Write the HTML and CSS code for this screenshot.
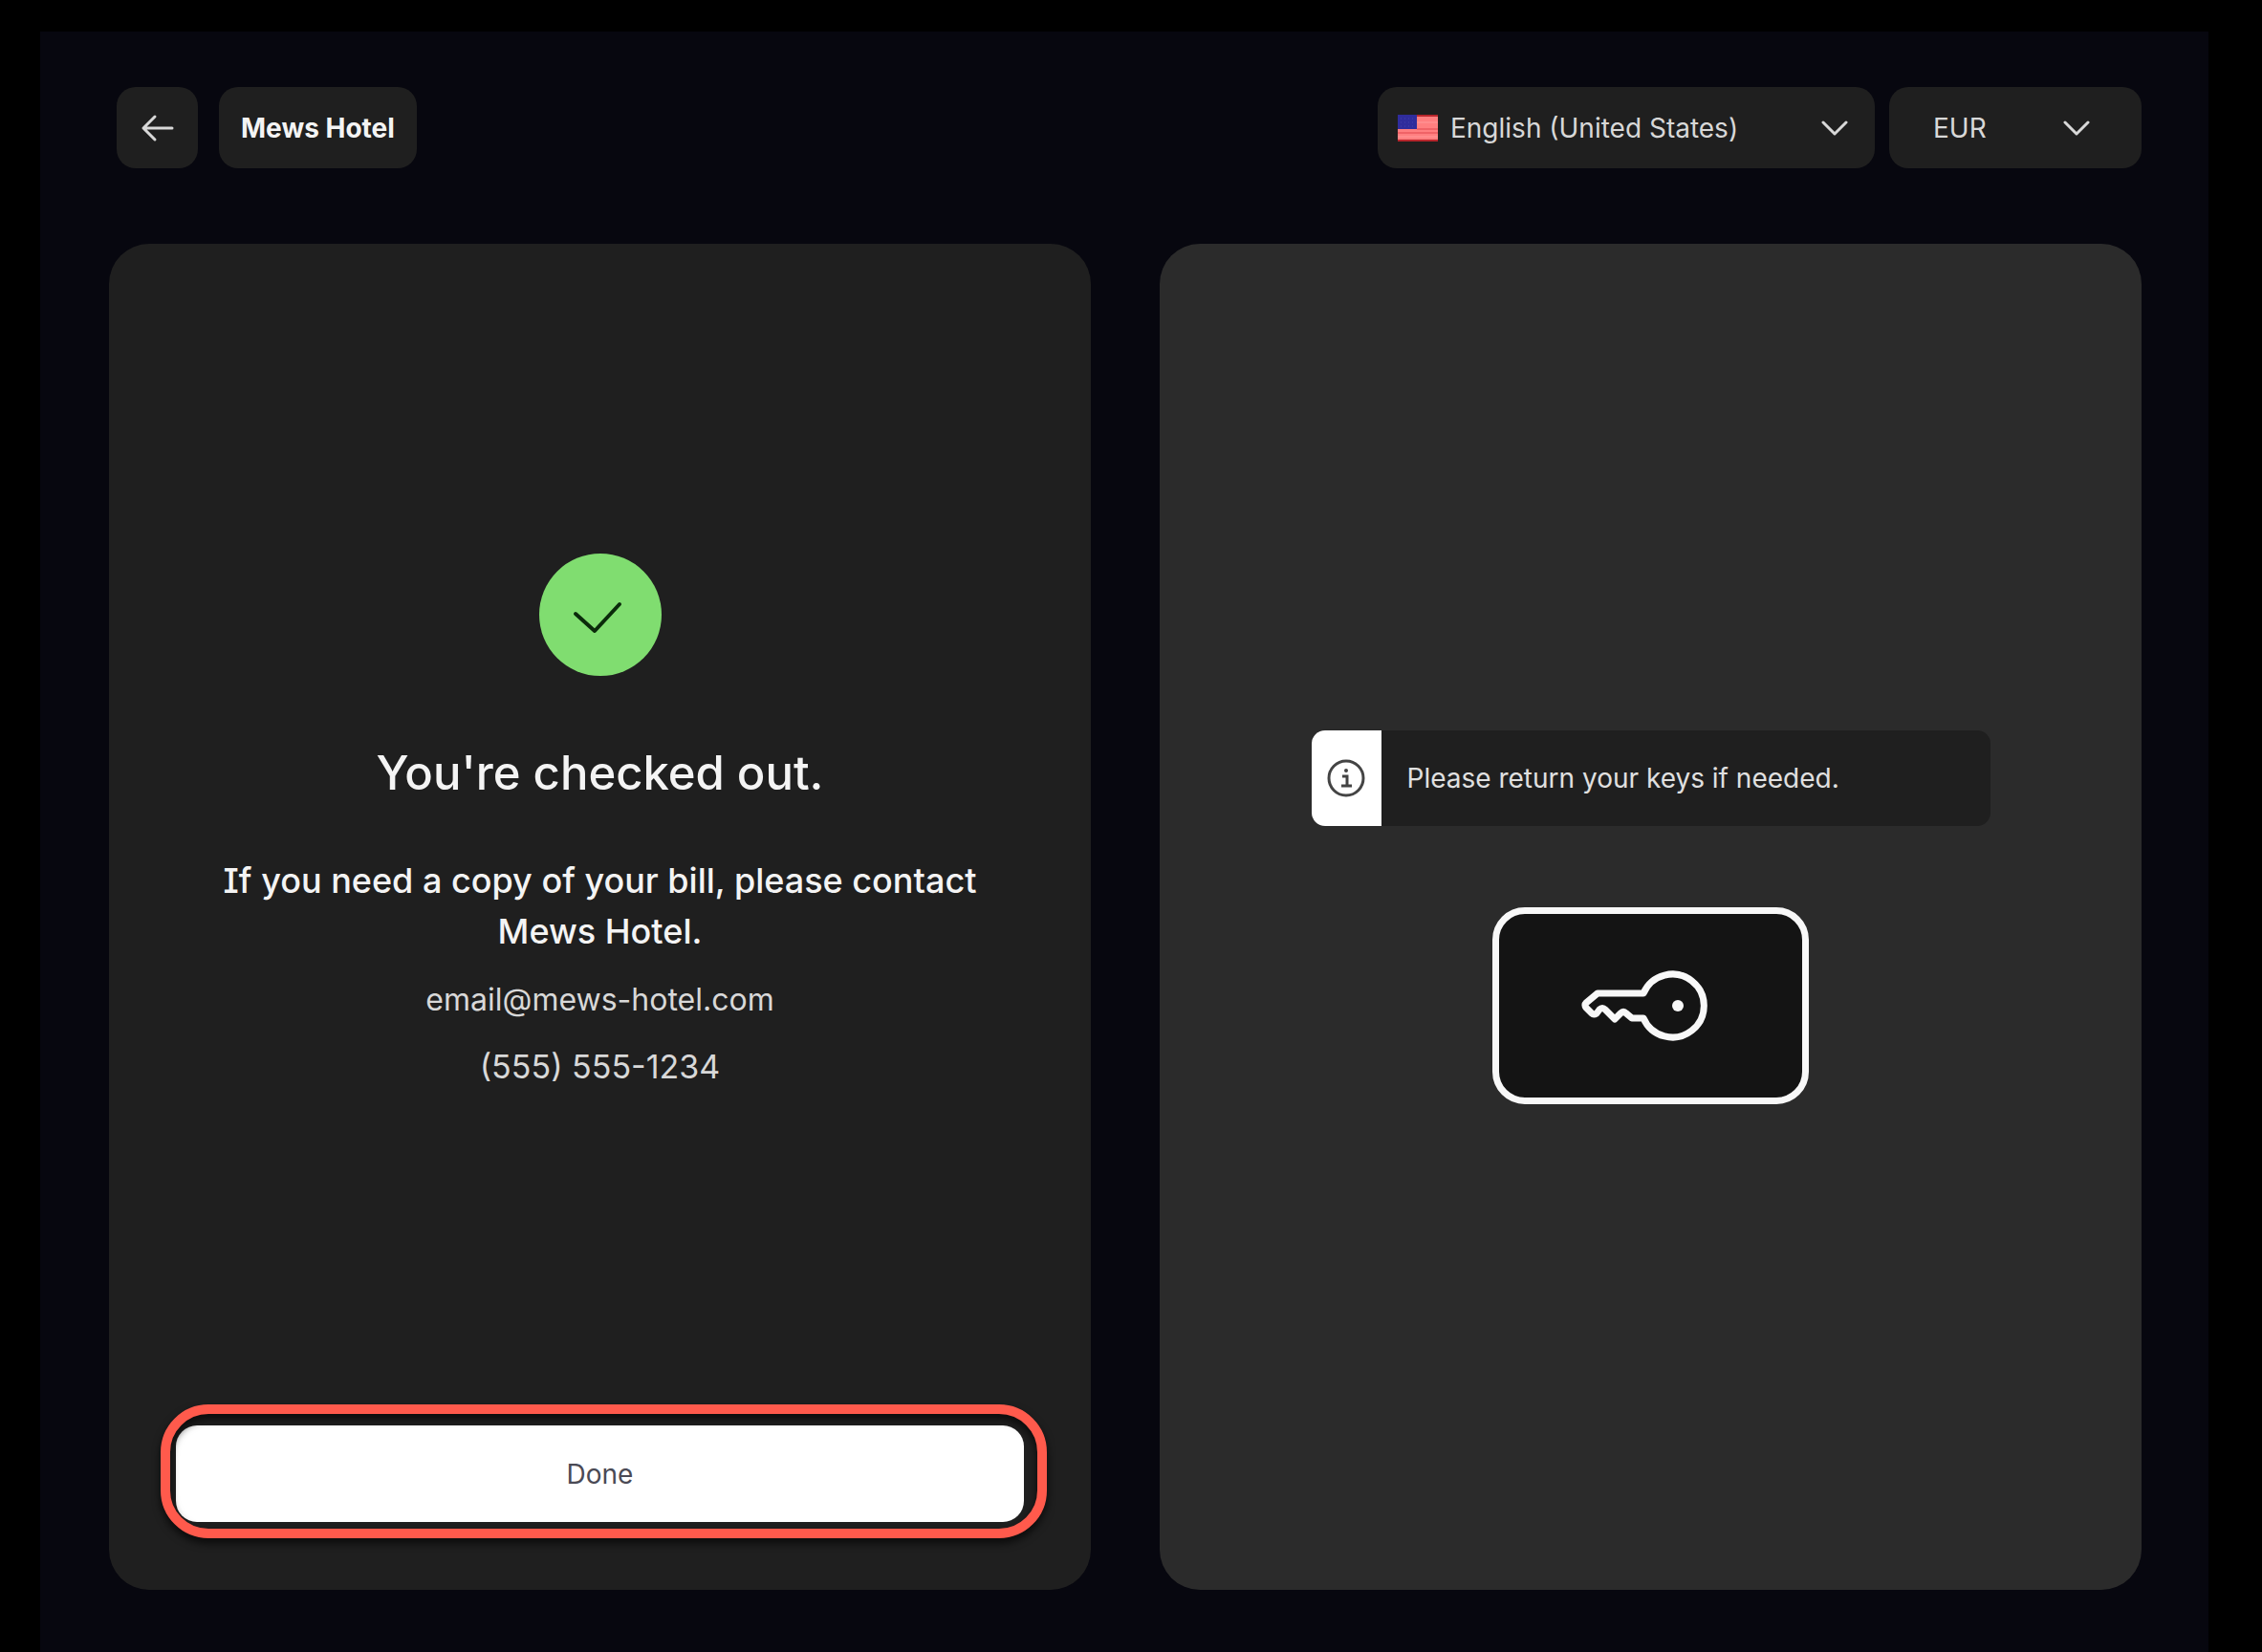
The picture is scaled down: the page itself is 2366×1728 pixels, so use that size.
FILE: index.html
```html
<!DOCTYPE html>
<html lang="en">
<head>
  <meta charset="utf-8">
  <title>Mews Hotel - Checked out</title>
  <meta name="viewport" content="width=device-width, initial-scale=1">
  <link rel="stylesheet" href="styles.css">
</head>
<body>
  <div class="screen">
    <header class="topbar">
      <button class="back-button" type="button" aria-label="Back">
        <svg width="36" height="30" viewBox="0 0 36 30" fill="none" stroke="currentColor" stroke-width="3" stroke-linecap="round" stroke-linejoin="round">
          <path d="M33 15H3M15 3L3 15l12 12"/>
        </svg>
      </button>
      <div class="hotel-name">Mews Hotel</div>

      <div class="picker picker-language">
        <svg class="flag" width="42" height="28" viewBox="0 0 42 28">
          <rect width="42" height="28" fill="#ff7f80"/>
          <path d="M20 1h22M0 27h42" stroke="#b8262c" stroke-width="2"/>
          <path d="M20 15h22M0 19h42" stroke="#e0484e" stroke-width="1"/>
          <path d="M20 8h22M0 23h42" stroke="#ff9a9a" stroke-width="1"/>
          <rect width="20" height="15" fill="#2f2c9c"/>
          <path d="M3 4h15M3 8h15M3 12h15" stroke="#4440ac" stroke-width="1" stroke-dasharray="1 3"/>
        </svg>
        <select aria-label="Language">
          <option>English (United States)</option>
        </select>
        <svg class="chevron" width="28" height="18" viewBox="0 0 28 18" fill="none" stroke="currentColor" stroke-width="3" stroke-linecap="round" stroke-linejoin="round">
          <path d="M2 3l12 12L26 3"/>
        </svg>
      </div>

      <div class="picker picker-currency">
        <select aria-label="Currency">
          <option>EUR</option>
        </select>
        <svg class="chevron" width="28" height="18" viewBox="0 0 28 18" fill="none" stroke="currentColor" stroke-width="3" stroke-linecap="round" stroke-linejoin="round">
          <path d="M2 3l12 12L26 3"/>
        </svg>
      </div>
    </header>

    <main class="panels">
      <section class="panel panel-message">
        <div class="message">
          <svg class="check" width="128" height="128" viewBox="0 0 128 128" fill="none">
            <circle cx="64" cy="64" r="64" fill="#80dd70"/>
            <path d="M38 63l20 18 26-28" stroke="#0b2b0b" stroke-width="4" stroke-linecap="round" stroke-linejoin="round"/>
          </svg>
          <h1>You're checked out.</h1>
          <p class="lead">If you need a copy of your bill, please contact Mews Hotel.</p>
          <a class="contact" href="mailto:email@mews-hotel.com">email@mews-hotel.com</a>
          <a class="contact phone" href="tel:5555551234">(555) 555-1234</a>
        </div>
        <div class="done">
          <button class="done-button" type="button">Done</button>
          <span class="highlight"></span>
        </div>
      </section>

      <section class="panel panel-keys">
        <div class="notice">
          <div class="notice-icon">
            <svg width="42" height="42" viewBox="0 0 42 42" fill="none" stroke="#444" stroke-width="3">
              <circle cx="21" cy="21" r="18"/>
              <path d="M17 19h5v10M16 29h11" stroke-width="3"/>
              <circle cx="21" cy="13" r="2" fill="#444" stroke="none"/>
            </svg>
          </div>
          <p>Please return your keys if needed.</p>
        </div>
        <div class="key-card">
          <svg width="148" height="76" viewBox="0 0 148 76" fill="none" stroke="#f8f8f8" stroke-width="7" stroke-linejoin="round">
            <path d="M66 25H18L6 35q-2 2 0 5l6 6q2 2 5 0l3-4q3-3 6 0l10 10 6-6q3-3 6 0l6 5H66A33 33 0 1 0 66 25Z"/>
            <circle cx="102" cy="38" r="6" fill="#f8f8f8" stroke="none"/>
          </svg>
        </div>
      </section>
    </main>
  </div>
</body>
</html>
```

FILE: styles.css
```css
* {
  box-sizing: border-box;
}

body {
  margin: 0;
  min-height: 100vh;
  padding: 33px 56px 0 42px;
  display: flex;
  background-color: #000;
  color: #f4f4f4;
  font-family: Inter, "Liberation Sans", sans-serif;
  font-size: 28px;
  line-height: 40px;
}

h1,
p {
  margin: 0;
}

button,
select {
  border: 0;
  font: inherit;
  cursor: pointer;
}

.screen {
  flex: 1;
  display: flex;
  flex-direction: column;
  gap: 79px;
  padding: 58px 70px 65px 72px;
  background-color: #07070f;
}

/* top bar */

.topbar {
  display: flex;
  padding-left: 8px;
}

.back-button,
.hotel-name,
.picker select {
  height: 85px;
  border-radius: 20px;
  background-color: #1f1f1f;
}

.back-button {
  width: 85px;
  margin-right: 22px;
  padding: 0;
  display: flex;
  align-items: center;
  justify-content: center;
  color: #d8d8d8;
}

.hotel-name {
  display: flex;
  align-items: center;
  margin-right: auto;
  padding: 0 23px;
  font-weight: 700;
}

.picker {
  position: relative;
  color: #d8d8d8;
}

.picker select {
  width: 100%;
  appearance: none;
  color: inherit;
}

.picker svg {
  position: absolute;
  top: 0;
  bottom: 0;
  margin: auto 0;
  pointer-events: none;
}

.picker-language {
  width: 520px;
  margin-right: 15px;
}

.picker-language select {
  padding: 0 64px 0 76px;
}

.picker-language .flag {
  left: 21px;
}

.picker-language .chevron {
  right: 28px;
}

.picker-currency {
  width: 264px;
}

.picker-currency select {
  padding: 0 88px 0 46px;
}

.picker-currency .chevron {
  right: 54px;
}

/* panels */

.panels {
  flex: 1;
  display: grid;
  grid-template-columns: 1fr 1fr;
  gap: 72px;
}

.panel {
  display: flex;
  flex-direction: column;
  border-radius: 42px;
}

.panel-message {
  padding: 0 70px 71px;
  background-color: #1f1f1f;
}

.message {
  flex: 1;
  display: flex;
  flex-direction: column;
  align-items: center;
  justify-content: center;
  padding: 0 40px 16px;
  text-align: center;
}

h1 {
  margin: 70px 0 54px;
  font-size: 49px;
  font-weight: 500;
  line-height: 64px;
}

.lead {
  margin-bottom: 10px;
  font-size: 36px;
  font-weight: 500;
  line-height: 53px;
  font-feature-settings: "cv08";
}

.contact {
  color: #d8d8d8;
  font-size: 32px;
  line-height: 70px;
  text-decoration: none;
}

.phone {
  font-size: 34px;
}

.done {
  position: relative;
}

.done-button {
  display: block;
  width: 100%;
  height: 101px;
  border-radius: 22px;
  background-color: #fff;
  color: #4a4a55;
}

/* ring drawn round the button */
.highlight {
  position: absolute;
  top: -22px;
  right: -24px;
  bottom: -17px;
  left: -16px;
  border: 10px solid #ff5a4c;
  border-radius: 50px;
  filter: drop-shadow(0 5px 4px rgba(0, 0, 0, 0.7));
  pointer-events: none;
}

.panel-keys {
  align-items: center;
  justify-content: center;
  gap: 85px;
  background-color: #2b2b2b;
}

.notice {
  width: 710px;
  max-width: 100%;
  display: flex;
  border-radius: 14px;
  overflow: hidden;
  background-color: #1f1f1f;
  color: #e0e0e0;
}

.notice-icon {
  width: 73px;
  display: flex;
  align-items: center;
  justify-content: center;
  background-color: #fff;
}

.notice p {
  padding: 30px 27px;
}

.key-card {
  width: 331px;
  height: 206px;
  display: flex;
  align-items: center;
  justify-content: center;
  border: 7px solid #f8f8f8;
  border-radius: 34px;
  background-color: #141414;
}
```
